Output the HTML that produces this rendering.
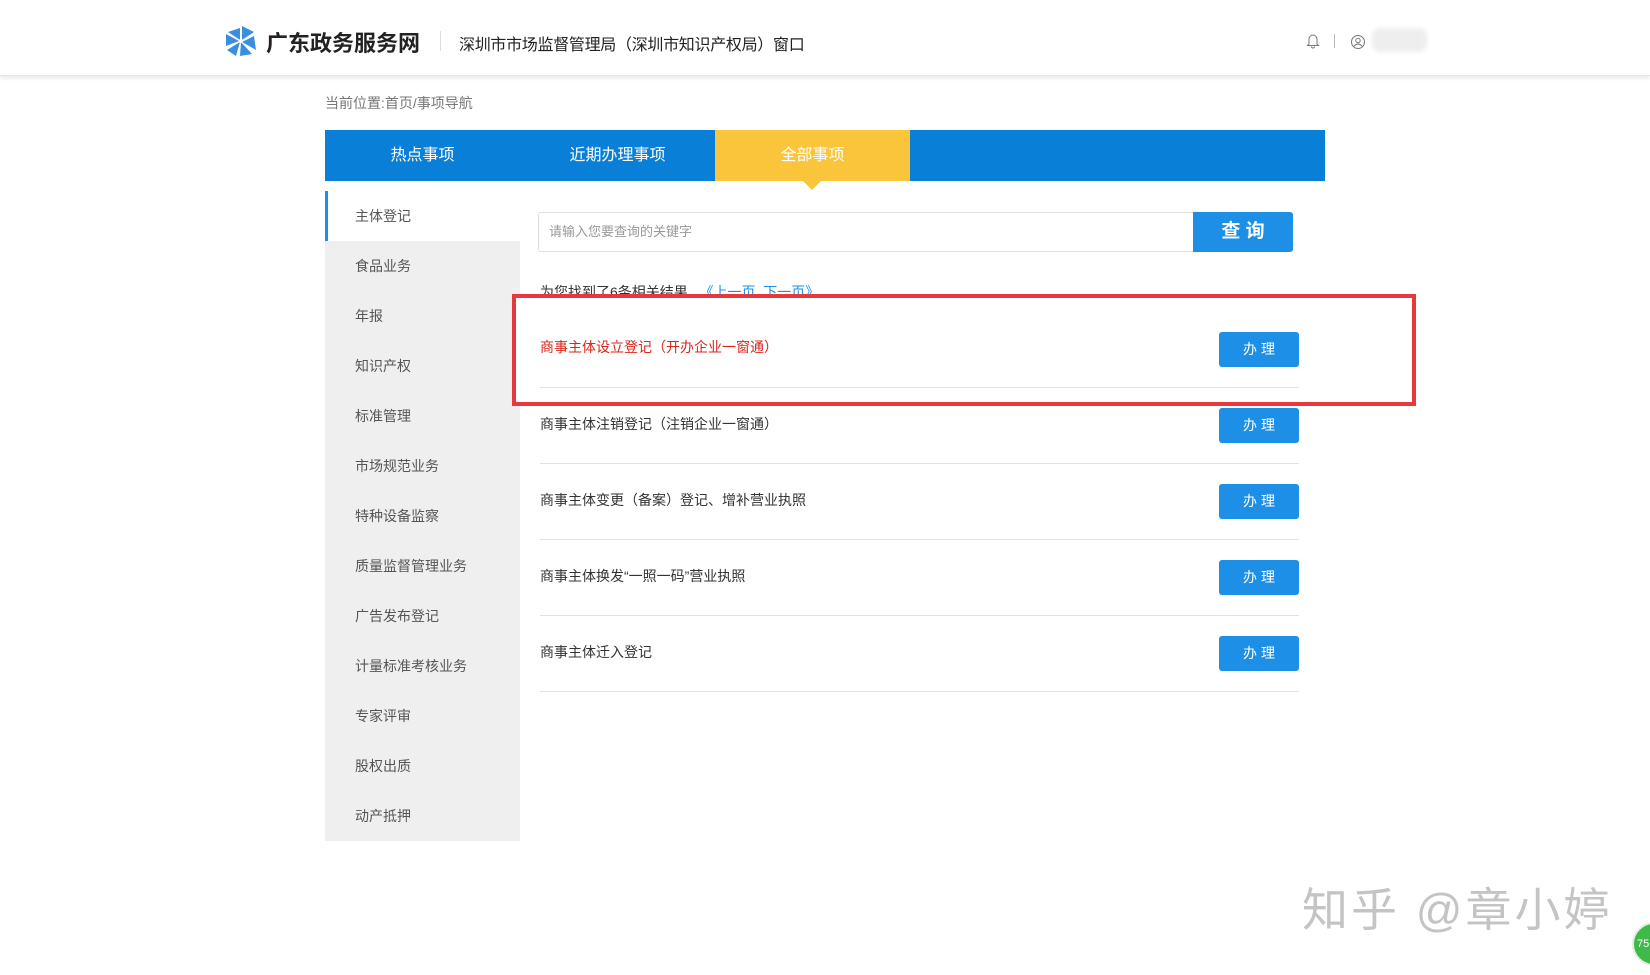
<!DOCTYPE html>
<html><head><meta charset="utf-8"><style>
*{margin:0;padding:0;box-sizing:border-box}
body{width:1650px;height:975px;position:relative;background:#fff;font-family:"Liberation Sans","Noto Sans CJK SC",sans-serif;overflow:hidden;color:#333}
.a{position:absolute;white-space:nowrap}
.hdr{position:absolute;left:0;top:0;width:1650px;height:76px;background:#fff;box-shadow:0 2px 4px rgba(0,0,0,.1);border-bottom:1px solid #e6e6e6}
.tab{position:absolute;top:130px;height:51px;width:195px;color:#fff;font-size:16px;text-align:center;line-height:51px}
.side{position:absolute;left:325px;width:195px;height:50px;font-size:14px;color:#555;line-height:50px;padding-left:30px}
.sep{position:absolute;left:540px;width:759px;height:1px;background:#e2e2e2}
.row{position:absolute;left:540px;font-size:14px;color:#333}
.btn{position:absolute;left:1219px;width:80px;height:35px;background:#1e8fe6;color:#fff;border-radius:3px;font-size:14px;text-align:center;line-height:35px;letter-spacing:4px;text-indent:4px}
</style></head><body>
<div class="hdr"></div>
<svg class="a" style="left:224px;top:24px" width="34" height="34" viewBox="0 0 34 34">
<path d="M4 8 L16 4 L16 16 Z M18 2 L30 8 L18 16 Z M30 12 L32 26 L18 18 Z M28 30 L16 32 L17 18 Z M12 32 L3 26 L16 18 Z M2 22 L2 10 L15 17 Z" fill="#3a8ee0"/>
<circle cx="17" cy="17" r="2" fill="#fff"/></svg>
<div class="a" style="left:266px;top:26px;font-size:22px;font-weight:bold;color:#222">广东政务服务网</div>
<div class="a" style="left:440px;top:31px;width:1px;height:20px;background:#ddd"></div>
<div class="a" style="left:459px;top:31px;font-size:16px;color:#222;letter-spacing:-0.3px">深圳市市场监督管理局（深圳市知识产权局）窗口</div>
<svg class="a" style="left:1306px;top:32px" width="14" height="17" viewBox="0 0 14 17"><path d="M3 12 V7 a4 4 0 0 1 8 0 V12 L12.5 13.5 H1.5 Z M5.5 14.5 a1.5 1.5 0 0 0 3 0" fill="none" stroke="#777" stroke-width="1"/></svg>
<div class="a" style="left:1334px;top:34px;width:1px;height:14px;background:#bbb"></div>
<svg class="a" style="left:1350px;top:34px" width="16" height="16" viewBox="0 0 16 16"><circle cx="8" cy="8" r="6.5" fill="none" stroke="#777"/><circle cx="8" cy="6.5" r="2.2" fill="none" stroke="#777"/><path d="M4 12 Q8 8 12 12" fill="none" stroke="#777"/></svg>
<div class="a" style="left:1372px;top:28px;width:55px;height:24px;background:#eee;border-radius:8px;filter:blur(2px)"></div>
<div class="a" style="left:325px;top:93px;font-size:14px;color:#777">当前位置:首页/事项导航</div>
<div class="a" style="left:325px;top:130px;width:1000px;height:51px;background:#0a7fd8"></div>
<div class="tab" style="left:325px">热点事项</div>
<div class="tab" style="left:520px">近期办理事项</div>
<div class="tab" style="left:715px;background:#fbc53b">全部事项</div>
<div class="a" style="left:803px;top:181px;width:0;height:0;border-left:9px solid transparent;border-right:9px solid transparent;border-top:9px solid #fbc53b"></div>
<div class="a" style="left:325px;top:241px;width:195px;height:600px;background:#efefef"></div>
<div class="side" style="top:191px;border-left:3px solid #1e8fe6;padding-left:27px">主体登记</div>
<div class="side" style="top:241px">食品业务</div>
<div class="side" style="top:291px">年报</div>
<div class="side" style="top:341px">知识产权</div>
<div class="side" style="top:391px">标准管理</div>
<div class="side" style="top:441px">市场规范业务</div>
<div class="side" style="top:491px">特种设备监察</div>
<div class="side" style="top:541px">质量监督管理业务</div>
<div class="side" style="top:591px">广告发布登记</div>
<div class="side" style="top:641px">计量标准考核业务</div>
<div class="side" style="top:691px">专家评审</div>
<div class="side" style="top:741px">股权出质</div>
<div class="side" style="top:791px">动产抵押</div>
<div class="a" style="left:538px;top:212px;width:656px;height:40px;border:1px solid #ddd;border-radius:3px 0 0 3px;font-size:13px;color:#999;line-height:38px;padding-left:10px">请输入您要查询的关键字</div>
<div class="a" style="left:1193px;top:212px;width:100px;height:40px;background:#1e8fe6;color:#fff;border-radius:0 3px 3px 0;font-size:19px;font-weight:bold;text-align:center;line-height:40px">查 询</div>
<div class="a" style="left:540px;top:282px;font-size:14px;color:#333">为您找到了6条相关结果 &nbsp;&nbsp;<span style="color:#1e8fe6">《上一页 &nbsp;下一页》</span></div>
<div class="a" style="left:512px;top:294px;width:904px;height:112px;border:4px solid #e8383d;background:#fff"></div>
<div class="row" style="top:337px;color:#d9261c">商事主体设立登记（开办企业一窗通）</div>
<div class="btn" style="top:332px">办理</div>
<div class="sep" style="top:387px"></div>
<div class="row" style="top:414px">商事主体注销登记（注销企业一窗通）</div>
<div class="btn" style="top:408px">办理</div>
<div class="sep" style="top:463px"></div>
<div class="row" style="top:490px">商事主体变更（备案）登记、增补营业执照</div>
<div class="btn" style="top:484px">办理</div>
<div class="sep" style="top:539px"></div>
<div class="row" style="top:566px">商事主体换发“一照一码”营业执照</div>
<div class="btn" style="top:560px">办理</div>
<div class="sep" style="top:615px"></div>
<div class="row" style="top:642px">商事主体迁入登记</div>
<div class="btn" style="top:636px">办理</div>
<div class="sep" style="top:691px"></div>
<div class="a" style="left:1302px;top:874px;font-size:46px;color:#c4c4c4;letter-spacing:3px">知乎 @章小婷</div>
<div class="a" style="left:1632px;top:922px;width:44px;height:44px;border-radius:50%;background:#3fba4a;border:2px solid #e0f0e0;color:#fff;font-size:11px;line-height:40px;padding-left:3px">75</div>
</body></html>
